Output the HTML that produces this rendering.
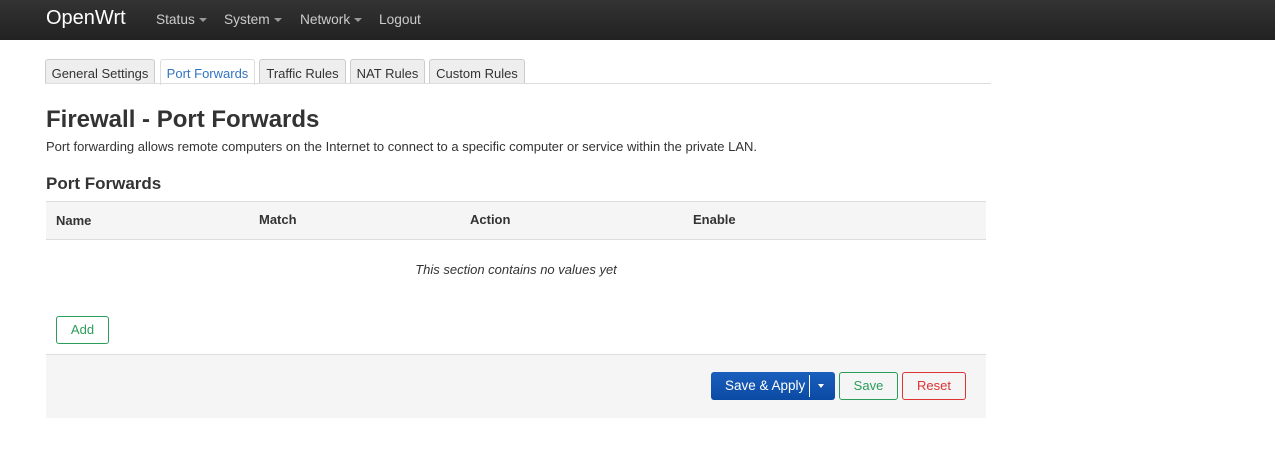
<!DOCTYPE html>
<html><head><style>
*{box-sizing:border-box}
body{margin:0;width:1275px;height:470px;background:#fff;font-family:"Liberation Sans",Arial,sans-serif;color:#333;font-size:13px;overflow:hidden;position:relative}
.nav{position:absolute;left:0;top:0;width:1275px;height:40px;background:linear-gradient(#333,#222);}
.nav span{position:absolute;top:12px;color:#ccc;font-size:13.7px}
.caret{display:inline-block;border-top:4px solid #999;border-left:4px solid transparent;border-right:4px solid transparent;vertical-align:middle;margin-left:4px}
.brand{color:#fff!important;font-size:20px!important;top:7px!important}
.tabs{position:absolute;left:45px;top:83px;width:946px;border-top:1px solid #ddd}
.tab{position:absolute;top:59px;height:25px;border:1px solid #ccc;border-bottom:none;background:#eee;border-radius:3px 3px 0 0;font-size:13px;padding:6px 0 0;text-align:center;white-space:nowrap;color:#333}
.tab.act{background:#fff;color:#3274c4;border-color:#ddd;height:26px}
.abs{position:absolute;white-space:nowrap}
</style></head><body>
<div class="nav">
<span class="brand" style="left:46px">OpenWrt</span>
<span style="left:156px">Status<i class="caret"></i></span>
<span style="left:224px">System<i class="caret"></i></span>
<span style="left:300px">Network<i class="caret"></i></span>
<span style="left:379px">Logout</span>
</div>
<div class="tab" style="left:45px;width:110px">General Settings</div>
<div class="tab act" style="left:160px;width:95px">Port Forwards</div>
<div class="tab" style="left:259px;width:87px">Traffic Rules</div>
<div class="tab" style="left:350px;width:75px">NAT Rules</div>
<div class="tab" style="left:429px;width:96px">Custom Rules</div>
<div class="tabs"></div>
<div class="abs" style="left:46px;top:106px;font-size:24px;font-weight:bold">Firewall - Port Forwards</div>
<div class="abs" style="left:46px;top:139px;font-size:13px">Port forwarding allows remote computers on the Internet to connect to a specific computer or service within the private LAN.</div>
<div class="abs" style="left:46px;top:174px;font-size:17px;font-weight:bold">Port Forwards</div>
<div class="abs" style="left:46px;top:201px;width:940px;height:39px;background:#f5f5f5;border-top:1px solid #ddd;border-bottom:1px solid #ddd;font-weight:bold">
<span class="abs" style="left:10px;top:11px">Name</span>
<span class="abs" style="left:213px;top:10px">Match</span>
<span class="abs" style="left:424px;top:10px">Action</span>
<span class="abs" style="left:647px;top:10px">Enable</span>
</div>
<div class="abs" style="left:46px;top:262px;width:940px;text-align:center;font-style:italic;font-size:13px">This section contains no values yet</div>
<div class="abs" style="left:56px;top:316px;width:53px;height:28px;border:1px solid #2a9d5a;border-radius:3px;color:#2a9d5a;text-align:center;line-height:26px">Add</div>
<div class="abs" style="left:46px;top:354px;width:940px;height:64px;background:#f5f5f5;border-top:1px solid #ddd"></div>
<div class="abs" style="left:711px;top:372px;width:124px;height:28px;background:linear-gradient(#1a5fbd,#0b4aa3);border-radius:3px;color:#fff;font-size:13.5px;line-height:27px;padding-left:14px">Save &amp; Apply
<span class="abs" style="left:98px;top:3px;width:1px;height:22px;background:#fff"></span>
<span class="abs" style="left:107px;top:12px;border-top:4px solid #fff;border-left:3px solid transparent;border-right:3px solid transparent"></span></div>
<div class="abs" style="left:839px;top:372px;width:59px;height:28px;border:1px solid #2a9d5a;border-radius:3px;color:#2a9d5a;text-align:center;line-height:26px">Save</div>
<div class="abs" style="left:902px;top:372px;width:64px;height:28px;border:1px solid #d33;border-radius:3px;color:#d33;text-align:center;line-height:26px">Reset</div>
</body></html>
